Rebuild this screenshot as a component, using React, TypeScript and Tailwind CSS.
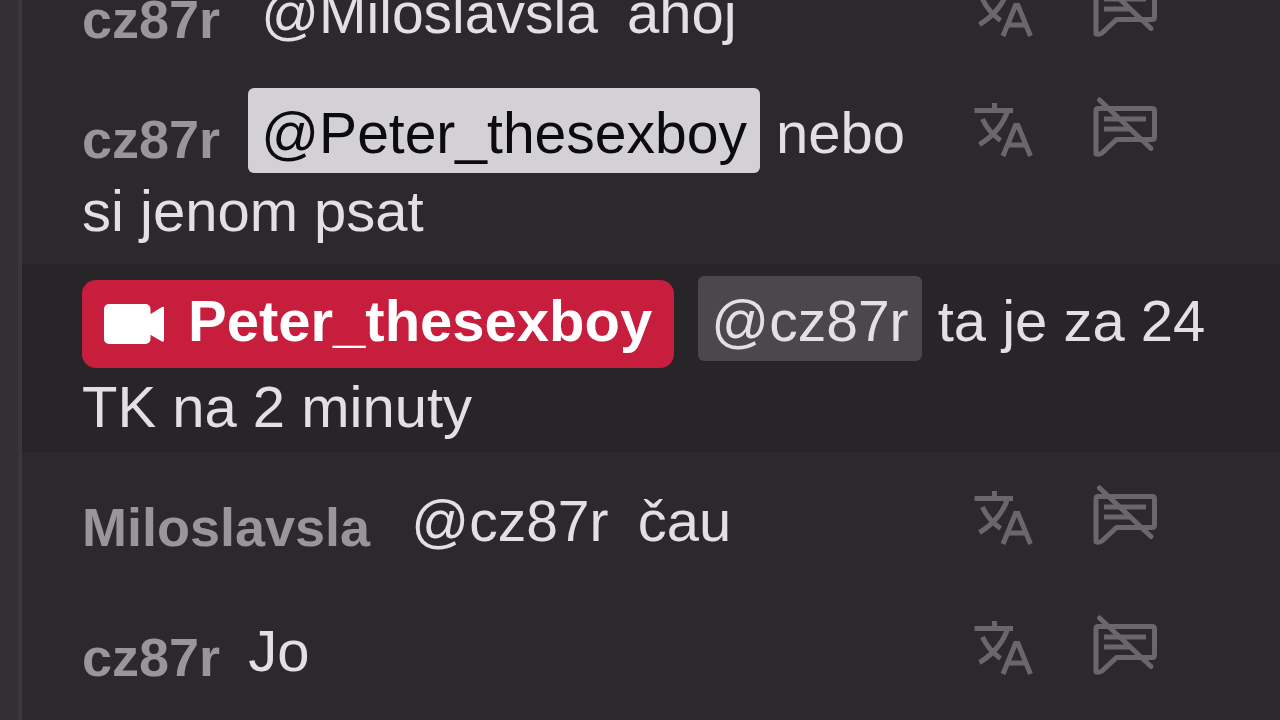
import type { ReactNode } from "react";

function TranslateIcon() {
  return (
    <svg width="60" height="56" viewBox="0 0 60 56" fill="none" stroke="currentColor" strokeWidth="5" aria-hidden="true">
      <path d="M1.5 8.5H40M21.5 1V8.5M34.5 8.5C31.5 20 21 34 6.5 42.5M9.5 17C13 25 20 33 27.5 38.5" />
      <path d="M30 54L42.5 23.5H45L57.5 54M34.5 43H53" />
    </svg>
  );
}

function MuteChatIcon() {
  return (
    <svg width="66" height="62" viewBox="0 0 66 62" fill="none" stroke="currentColor" strokeWidth="5" aria-hidden="true">
      <path strokeLinejoin="round" d="M6 12.5H60Q62.5 12.5 62.5 15V41Q62.5 43.5 60 43.5H24.5L10 57Q7 59 4 58V15Q4 12.5 6 12.5Z" />
      <path d="M12 23H54M12 33H38" />
      <path strokeLinecap="round" d="M7.5 4L59 52.5" />
    </svg>
  );
}

function CameraIcon() {
  return (
    <svg className="mr-6 inline align-[-3px]" width="60" height="40" viewBox="0 0 60 40" fill="currentColor" aria-hidden="true">
      <rect x="0" y="0" width="46.5" height="40" rx="5" />
      <path d="M45 11L58 3Q60 2 60 4V36Q60 38.5 58 37.5L45 30Z" />
    </svg>
  );
}

function Name({ children }: { children: string }) {
  return (
    <a href="#profile" className="mr-3 align-[-5px] text-[54px] leading-none font-bold text-[#98969a]">
      {children}
    </a>
  );
}

function Badge({ children }: { children: string }) {
  return (
    <a href="#profile" className="mr-2 rounded-[14px] bg-[#c81e3e] px-[22px] pt-2 pb-[15px] leading-none font-bold text-white">
      <CameraIcon />
      {children}
    </a>
  );
}

const tones = {
  plain: "",
  light: "bg-[#d3d1d4] text-[#0c0b0d]",
  dim: "bg-[#4a484b]",
};

function Mention({ tone = "plain", children }: { tone?: keyof typeof tones; children: string }) {
  return (
    <a href="#mention" className={`rounded-md px-[13px] pt-[13px] pb-2 text-[57px] ${tones[tone]}`}>
      {children}
    </a>
  );
}

function Message({ className = "", children }: { className?: string; children: ReactNode }) {
  return (
    <li className={`flex items-start gap-6 pt-[30px] pr-[122px] pb-3 pl-[60px] ${className}`}>
      <p className="min-w-0 flex-1 leading-[78px]">{children}</p>
      <div className="flex shrink-0 items-end gap-[59px] pt-0.5 text-[#69676a]">
        <button type="button" aria-label="Translate message">
          <TranslateIcon />
        </button>
        <button type="button" aria-label="Mute user">
          <MuteChatIcon />
        </button>
      </div>
    </li>
  );
}

export default function App() {
  return (
    <main className="flex h-screen overflow-hidden bg-[#2b292c] font-['Liberation_Sans',Arial,sans-serif] text-[58px] text-[#e2e0e3]">
      <div className="w-[22px] shrink-0 border-r-4 border-[#39373b] bg-[#323034]" />
      <ul className="-mt-14 min-w-0 flex-1">
        <Message>
          <Name>cz87r</Name> <Mention>@Miloslavsla</Mention> ahoj
        </Message>
        <Message className="mb-0.5">
          <Name>cz87r</Name> <Mention tone="light">@Peter_thesexboy</Mention> nebo si jenom psat
        </Message>
        <li className="bg-[#272528] pt-[14px] pr-[60px] pb-[3px] pl-[60px]">
          <p className="leading-[85px]">
            <Badge>Peter_thesexboy</Badge> <Mention tone="dim">@cz87r</Mention> ta je za 24 TK na 2 minuty
          </p>
        </li>
        <Message className="mb-2.5">
          <Name>Miloslavsla</Name> <Mention>@cz87r</Mention> čau
        </Message>
        <Message>
          <Name>cz87r</Name> Jo
        </Message>
      </ul>
    </main>
  );
}
